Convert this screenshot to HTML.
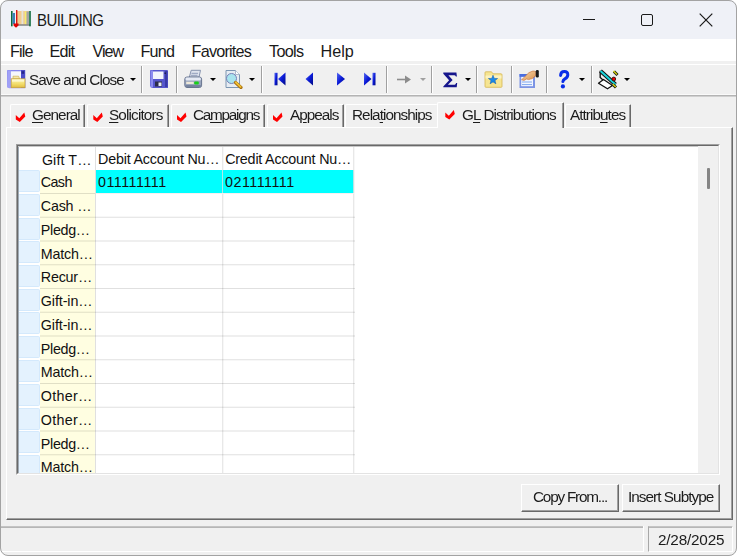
<!DOCTYPE html>
<html><head><meta charset="utf-8">
<style>
html,body{margin:0;padding:0;width:737px;height:556px;overflow:hidden;background:#fff;}
*{box-sizing:border-box;}
body{font-family:"Liberation Sans",sans-serif;color:#000;position:relative;}
.a{position:absolute;}
.t{position:absolute;white-space:pre;line-height:1;}
.mi{font-size:16.2px;color:#1a1a1a;top:42.8px;letter-spacing:-0.8px;}
.cl{font-size:15.3px;color:#1c1c1c;letter-spacing:-0.95px;will-change:transform;}
.sep{position:absolute;top:66px;width:2px;height:27px;border-left:1px solid #a0a0a0;border-right:1px solid #fff;}
.dd{position:absolute;top:78px;width:0;height:0;border-left:3px solid transparent;border-right:3px solid transparent;border-top:3px solid #000;}
.tab{position:absolute;top:104px;height:23px;border-top:1px solid #fff;border-left:1px solid #fff;border-right:1px solid #696969;box-shadow:inset -1px 0 0 #a0a0a0;border-top-left-radius:2px;border-top-right-radius:1px;}
u{text-decoration:underline;text-decoration-thickness:1px;text-underline-offset:2px;}
.hl{position:absolute;left:40px;width:314px;height:1px;background:#e4e4e4;}
.vl{position:absolute;width:1px;background:#e4e4e4;}
.sc{position:absolute;left:18px;width:22px;height:22px;background:#e4f2fe;border:1px solid #d4e9fc;border-left:none;border-radius:0 2px 2px 0;}
.gl{font-size:14.3px;color:#111;letter-spacing:-0.3px;left:41px;}
.btn{position:absolute;top:484px;height:28px;width:98px;border-top:1px solid #fff;border-left:1px solid #fff;border-right:1px solid #696969;border-bottom:1px solid #696969;box-shadow:inset -1px -1px 0 #a0a0a0;background:#f0f0f0;}
</style></head><body>
<div class="a" style="left:0;top:0;width:737px;height:556px;border-radius:8px;overflow:hidden;background:#f0f0f0;">
  <!-- title bar -->
  <div class="a" style="left:0;top:0;width:737px;height:39px;background:#eff1f7;"></div>
  <svg class="a" style="left:0;top:0" width="40" height="40" viewBox="0 0 40 40">
    <rect x="17" y="11" width="12" height="14" fill="#f2cc8e"/>
    <rect x="21.5" y="10.5" width="2" height="14" fill="#e6e2da"/>
    <rect x="23.5" y="11" width="1.5" height="14" fill="#f0d090"/>
    <rect x="25" y="11.5" width="1.5" height="13" fill="#f6ee6a"/>
    <rect x="26.5" y="11.5" width="2.5" height="13.5" fill="#a4a4a4"/>
    <rect x="17" y="24.2" width="13" height="1.6" fill="#8a8a8a"/>
    <rect x="11" y="11" width="1.6" height="15.3" fill="#0d6a3c"/>
    <rect x="29.2" y="11" width="1.6" height="15.3" fill="#0d6a3c"/>
    <rect x="12.5" y="13" width="2.5" height="11" fill="#3d80b8"/>
    <rect x="15" y="9" width="1.2" height="15" fill="#f4f4f4"/>
    <rect x="16" y="10" width="1.4" height="14" fill="#d81818"/>
    <path d="M13.5 23.5H18.5V25.5L16 27.7L13.5 25.5Z" fill="#e00000"/>
  </svg>
  <div class="t" style="left:37px;top:11.6px;font-size:16.4px;letter-spacing:-0.6px;color:#1a1a1a;transform:scaleX(0.915);transform-origin:0 0;">BUILDING</div>
  <div class="a" style="left:583px;top:19px;width:12px;height:1px;background:#1a1a1a;"></div>
  <div class="a" style="left:641px;top:14px;width:12px;height:12px;border:1.2px solid #1a1a1a;border-radius:2px;"></div>
  <svg class="a" style="left:699px;top:13px" width="14" height="14" viewBox="0 0 14 14"><path d="M0.7 0.7L13.3 13.3M13.3 0.7L0.7 13.3" stroke="#1a1a1a" stroke-width="1.2"/></svg>

  <!-- menu -->
  <div class="a" style="left:0;top:39px;width:737px;height:22px;background:#fff;"></div>
  <div class="t mi" style="left:10px;letter-spacing:-0.9px">File</div>
  <div class="t mi" style="left:49.5px;letter-spacing:-0.8px">Edit</div>
  <div class="t mi" style="left:92.5px;letter-spacing:-1.0px">View</div>
  <div class="t mi" style="left:140.5px;letter-spacing:-0.8px">Fund</div>
  <div class="t mi" style="left:191.6px;letter-spacing:-0.8px">Favorites</div>
  <div class="t mi" style="left:269px;letter-spacing:-0.7px">Tools</div>
  <div class="t mi" style="left:320.5px;letter-spacing:0">Help</div>

  <!-- toolbar -->
  <div class="a" style="left:0;top:64px;width:737px;height:1px;background:#fff"></div>
  <div class="a" style="left:0;top:94px;width:737px;height:1px;background:#fafafa"></div>
  <div class="a" style="left:0;top:95px;width:737px;height:1px;background:#b4b4b4"></div>
  <div class="a" style="left:0;top:96px;width:737px;height:1px;background:#d0d0d0"></div>
  <!-- save&close icon -->
  <svg class="a" style="left:4px;top:67px" width="24" height="24" viewBox="0 0 24 24">
    <defs>
      <linearGradient id="scp" x1="0" y1="0" x2="0" y2="1"><stop offset="0" stop-color="#8484ec"/><stop offset="1" stop-color="#a4a4f8"/></linearGradient>
      <linearGradient id="scf" x1="0" y1="0" x2="0" y2="1"><stop offset="0" stop-color="#fbf4b4"/><stop offset="0.6" stop-color="#f2dc68"/><stop offset="1" stop-color="#e0bc40"/></linearGradient>
    </defs>
    <path d="M3 4Q3 3 4 3H21L21.2 21.2H5L3 19.2Z" fill="url(#scp)"/>
    <rect x="3.4" y="3.4" width="3.4" height="17.5" fill="#a0a0f6"/>
    <rect x="17" y="3" width="4.2" height="18" fill="#4c4cc8"/>
    <rect x="17.6" y="4.2" width="2.6" height="2.6" fill="#26268a"/>
    <rect x="6.9" y="4.3" width="10.1" height="7.5" fill="#f6f7fc"/>
    <path d="M9 9.2H14.6L15.6 11.8H9Z" fill="#f4e8a8" stroke="#c8a848" stroke-width="0.6"/>
    <rect x="7.2" y="11.8" width="13.8" height="8.9" fill="url(#scf)" stroke="#c9a438" stroke-width="0.7"/>
    <rect x="8" y="12.6" width="12" height="2" fill="#fdf8d0"/>
  </svg>
  <div class="t cl" style="left:28.5px;top:71.5px">Save and Close</div>
  <div class="dd" style="left:130px"></div>
  <div class="sep" style="left:141px"></div>
  <!-- floppy -->
  <svg class="a" style="left:150px;top:70px" width="18" height="18" viewBox="0 0 18 18">
    <path d="M0 1Q0 0 1 0H17Q18 0 18 1V18H2L0 16Z" fill="#5656cc"/>
    <rect x="0.5" y="0.5" width="2.5" height="17" fill="#8c8cf0"/>
    <rect x="15" y="1" width="2.5" height="16" fill="#3a3aa8"/>
    <rect x="3" y="1.5" width="10.5" height="7.5" fill="#f2f4fc"/>
    <rect x="5" y="11.5" width="7" height="5" fill="#2c2c4a"/>
    <rect x="8.5" y="12.5" width="3" height="3.5" fill="#e8ecf8"/>
    <rect x="14.5" y="2.5" width="1.5" height="1.5" fill="#202050"/>
  </svg>
  <div class="sep" style="left:176px"></div>
  <!-- printer -->
  <svg class="a" style="left:181px;top:67px" width="24" height="24" viewBox="0 0 24 24">
    <path d="M10.2 3.3H19.5L18 10.2H8.3Z" fill="#dfe3ee" stroke="#7d8aa8" stroke-width="0.9"/>
    <path d="M10.5 6.3H17M9.8 8.3H16.5" stroke="#8894b4" stroke-width="0.9"/>
    <rect x="3.8" y="10" width="16.8" height="10.5" rx="2.2" fill="#9aa6be" stroke="#5c6a86" stroke-width="0.9"/>
    <rect x="4.6" y="10.6" width="15.2" height="2.8" rx="1" fill="#e6eaf4"/>
    <rect x="5.2" y="14.8" width="7.5" height="2.2" fill="#eee8d8"/>
    <rect x="13.2" y="14.6" width="4.6" height="2.8" rx="1" fill="#18d018"/>
    <rect x="4.6" y="18" width="15.2" height="2" fill="#76839e"/>
  </svg>
  <div class="dd" style="left:210px"></div>
  <!-- preview -->
  <svg class="a" style="left:225px;top:70px" width="19" height="19" viewBox="0 0 19 19">
    <path d="M1 0.5H10.5L14.5 4.5V17.5H1Z" fill="#e6ecf2" stroke="#7c96b2" stroke-width="1"/>
    <path d="M10.5 0.5V4.5H14.5" fill="#fff" stroke="#9aaac0" stroke-width="0.8"/>
    <circle cx="6.5" cy="8.5" r="5" fill="#a8e4ee" stroke="#7880b8" stroke-width="1"/>
    <path d="M10.5 12.5L16 17.5" stroke="#a87010" stroke-width="3.2" stroke-linecap="round"/>
    <path d="M10.8 12.3L15.6 16.8" stroke="#f0c030" stroke-width="1.8" stroke-linecap="round"/>
  </svg>
  <div class="dd" style="left:249px"></div>
  <div class="sep" style="left:261px"></div>
  <!-- nav -->
  <svg class="a" style="left:274px;top:72px" width="104" height="15" viewBox="0 0 104 15">
    <defs><linearGradient id="bg" x1="0" y1="0" x2="1" y2="1"><stop offset="0" stop-color="#5a6cf0"/><stop offset="0.5" stop-color="#0a1ad8"/><stop offset="1" stop-color="#000a80"/></linearGradient></defs>
    <rect x="0.5" y="0.8" width="3" height="12.5" fill="url(#bg)"/>
    <path d="M11.5 0.5V13.5L4 7Z" fill="url(#bg)"/>
    <path d="M39 0.5V13.5L31.5 7Z" fill="url(#bg)"/>
    <path d="M63 0.5V13.5L71 7Z" fill="url(#bg)"/>
    <path d="M90 0.5V13.5L97.5 7Z" fill="url(#bg)"/>
    <rect x="98.5" y="0.8" width="3" height="12.5" fill="url(#bg)"/>
  </svg>
  <div class="sep" style="left:386px"></div>
  <!-- gray arrow -->
  <svg class="a" style="left:397px;top:75px" width="15" height="10" viewBox="0 0 15 10">
    <path d="M0 4.5H10" stroke="#8c8c8c" stroke-width="1.6"/>
    <path d="M8 0.5L14 4.5L8 8.5Z" fill="#8c8c8c"/>
  </svg>
  <div class="dd" style="left:419.5px;border-top-color:#a0a0a0"></div>
  <div class="sep" style="left:431px"></div>
  <!-- sigma -->
  <svg class="a" style="left:443px;top:72px" width="15" height="16" viewBox="0 0 15 16">
    <path d="M0.3 0.6H13.4L13.9 4.4H12.9Q12.4 3.2 11.2 3.2H5.4L9.6 7.9L4.9 12.7H11.6Q12.6 12.7 13.1 11.1H14.2L13.7 15.3H0.3V14.5L6.1 8.3L0.3 1.7Z" fill="#16168c"/>
  </svg>
  <div class="dd" style="left:464.5px"></div>
  <div class="sep" style="left:476px"></div>
  <!-- folder star -->
  <svg class="a" style="left:484px;top:71px" width="19" height="17" viewBox="0 0 19 17">
    <path d="M1 1.5Q1 0.8 1.8 0.8H7.5L9 2.8H17Q18 2.8 18 3.8V15.5Q18 16.3 17 16.3H2Q1 16.3 1 15.5Z" fill="#f6e592" stroke="#d6b650" stroke-width="0.8"/>
    <rect x="1.5" y="4.5" width="16" height="3" fill="#fbf2c0"/>
    <path d="M9 4.2L10.3 7.4L13.6 7.5L11 9.6L11.9 12.8L9 10.9L6.1 12.8L7 9.6L4.4 7.5L7.7 7.4Z" fill="#1a8ae8" stroke="#0a58b0" stroke-width="0.5"/>
  </svg>
  <div class="sep" style="left:511px"></div>
  <!-- form hand -->
  <svg class="a" style="left:516px;top:67px" width="26" height="24" viewBox="0 0 26 24">
    <defs><linearGradient id="hg" x1="0" y1="0" x2="1" y2="1"><stop offset="0" stop-color="#fbdcb0"/><stop offset="1" stop-color="#d8904c"/></linearGradient></defs>
    <rect x="3.5" y="7" width="15.5" height="14" fill="#7c94e4"/>
    <rect x="3.5" y="7" width="15.5" height="2.8" fill="#4a6ee0"/>
    <rect x="5.2" y="9.9" width="11.8" height="9.3" fill="#f2f6fe"/>
    <path d="M6 15H16M6 17.6H16" stroke="#7ea6ee" stroke-width="1"/>
    <path d="M5.6 12.8L9 9.4L13 5.6L17 4L19.6 4.4L19.6 9L16.2 11.6L12.6 12.6L10.6 12L8 13.4Z" fill="url(#hg)" stroke="#c86c30" stroke-width="0.6"/>
    <rect x="19.8" y="3" width="3" height="7.6" rx="1.3" fill="#1a1a1a"/>
  </svg>
  <div class="sep" style="left:546px"></div>
  <!-- help -->
  <svg class="a" style="left:554px;top:68px" width="20" height="22" viewBox="0 0 20 22">
    <path d="M6.6 7.4Q6.8 3.6 10.4 3.6Q13.9 3.6 13.8 6.9Q13.7 9.4 10.9 10.9Q9 11.9 8.9 13.6" fill="none" stroke="#0a2ee8" stroke-width="3" stroke-linecap="round"/>
    <circle cx="8.9" cy="18.4" r="2.1" fill="#0a2ee8"/>
  </svg>
  <div class="dd" style="left:579px"></div>
  <div class="sep" style="left:591px"></div>
  <!-- satellite -->
  <svg class="a" style="left:596px;top:68px" width="26" height="22" viewBox="0 0 26 22">
    <path d="M2.5 15.2L7.5 11.5L12 14.5L16.5 17.5L11.5 20.8Z" fill="#fff" stroke="#111" stroke-width="1.3" stroke-linejoin="round"/>
    <path d="M4.2 2.8V9.5L7 12" fill="none" stroke="#111" stroke-width="1.4"/>
    <path d="M4.5 3L19.5 16.5" stroke="#111" stroke-width="4"/>
    <path d="M4.5 3L19.5 16.5" stroke="#1ad4dc" stroke-width="2"/>
    <path d="M18 3.5L21.5 7" stroke="#111" stroke-width="3"/>
    <path d="M17.5 3L21 6.5" stroke="#cccc10" stroke-width="1.6"/>
    <path d="M17 16.5L20 19.5" stroke="#111" stroke-width="3"/>
    <path d="M16.8 16.2L19.8 19" stroke="#cccc10" stroke-width="1.6"/>
    <circle cx="17.8" cy="11" r="1.9" fill="#e00" stroke="#111" stroke-width="0.8"/>
  </svg>
  <div class="dd" style="left:624px"></div>

  <!-- tab panel -->
  <div class="a" style="left:6px;top:127px;width:727px;height:393px;border-top:1px solid #fff;border-left:1px solid #fff;border-right:1px solid #696969;border-bottom:1px solid #696969;box-shadow:inset -1px -1px 0 #a0a0a0;"></div>

  <!-- tabs -->
  <div class="tab" style="left:10px;width:75px"></div>
  <div class="tab" style="left:87px;width:82px"></div>
  <div class="tab" style="left:171px;width:94px"></div>
  <div class="tab" style="left:267px;width:77px"></div>
  <div class="tab" style="left:345px;width:92px;border-right:none;box-shadow:none"></div>
  <div class="tab" style="left:437px;top:102px;height:26px;width:127px;background:#f0f0f0;"></div>
  <div class="a" style="left:438px;top:127px;width:124px;height:1px;background:#f0f0f0"></div>
  <div class="tab" style="left:565px;width:66px"></div>
  <svg class="a" style="left:0;top:0" width="737" height="130">
    <path transform="translate(15.3 112)" d="M0.5 3L4 6.2L9 0.5L10 4.5L4.5 10L0.5 7.5Z" fill="#f00"/>
    <path transform="translate(92.8 112)" d="M0.5 3L4 6.2L9 0.5L10 4.5L4.5 10L0.5 7.5Z" fill="#f00"/>
    <path transform="translate(176.5 112)" d="M0.5 3L4 6.2L9 0.5L10 4.5L4.5 10L0.5 7.5Z" fill="#f00"/>
    <path transform="translate(272.5 112)" d="M0.5 3L4 6.2L9 0.5L10 4.5L4.5 10L0.5 7.5Z" fill="#f00"/>
    <path transform="translate(444.8 109.5)" d="M0.5 3L4 6.2L9 0.5L10 4.5L4.5 10L0.5 7.5Z" fill="#f00"/>
  </svg>
  <div class="t cl" style="left:31.6px;top:106.6px"><u>G</u>eneral</div>
  <div class="t cl" style="left:109.4px;top:106.6px;letter-spacing:-0.85px"><u>S</u>olicitors</div>
  <div class="t cl" style="left:193.2px;top:106.6px;letter-spacing:-1.25px">Ca<u>m</u>paigns</div>
  <div class="t cl" style="left:289.8px;top:106.6px;letter-spacing:-1px">A<u>p</u>peals</div>
  <div class="t cl" style="left:351.5px;top:106.6px">Rela<u>t</u>ionships</div>
  <div class="t cl" style="left:462px;top:106.6px;letter-spacing:-0.9px">G<u>L</u> Distributions</div>
  <div class="t cl" style="left:569.5px;top:106.6px">Attrib<u>u</u>tes</div>

  <!-- grid -->
  <div class="a" style="left:16px;top:144px;width:704px;height:331px;border-top:1px solid #a0a0a0;border-left:1px solid #a0a0a0;border-right:1px solid #fff;border-bottom:1px solid #fff;">
    <div class="a" style="left:0;top:0;width:702px;height:329px;border-top:1px solid #696969;border-left:1px solid #696969;border-right:1px solid #e3e3e3;border-bottom:1px solid #e3e3e3;background:#fff;"></div>
  </div>
  <div class="a" style="left:698px;top:146px;width:20px;height:327px;background:#f0f0f0;"></div>
  <div class="a" style="left:707px;top:168px;width:2.5px;height:21px;background:#858585;border-radius:1px;"></div>
  <div id="gridc" class="a" style="left:18px;top:146px;width:680px;height:327px;overflow:hidden;">
    <div class="a" style="left:22px;top:24px;width:55px;height:310px;background:#fffee1"></div>
    <div class="a" style="left:78px;top:24px;width:126px;height:23px;background:#0ff"></div>
    <div class="a" style="left:205px;top:24px;width:130px;height:23px;background:#0ff"></div>
    <div class="a" style="left:77px;top:0px;width:1px;height:334px;background:rgba(0,0,0,0.122)"></div>
    <div class="a" style="left:204px;top:47px;width:1px;height:287px;background:rgba(0,0,0,0.091)"></div>
    <div class="a" style="left:205px;top:47px;width:1px;height:287px;background:rgba(0,0,0,0.030)"></div>
    <div class="a" style="left:335px;top:47px;width:1px;height:287px;background:rgba(0,0,0,0.091)"></div>
    <div class="a" style="left:336px;top:47px;width:1px;height:287px;background:rgba(0,0,0,0.030)"></div>
    <div class="a" style="left:204px;top:0px;width:1px;height:24px;background:rgba(0,0,0,0.091)"></div>
    <div class="a" style="left:205px;top:0px;width:1px;height:24px;background:rgba(0,0,0,0.030)"></div>
    <div class="a" style="left:335px;top:0px;width:1px;height:24px;background:rgba(0,0,0,0.091)"></div>
    <div class="a" style="left:336px;top:0px;width:1px;height:24px;background:rgba(0,0,0,0.030)"></div>
    <div class="a" style="left:204px;top:24px;width:1px;height:23px;background:#b4e6e6"></div>
    <div class="a" style="left:335px;top:24px;width:1px;height:23px;background:#b4e6e6"></div>
    <div class="a" style="left:336px;top:24px;width:1px;height:23px;background:#f4f4f4"></div>
    <div class="a" style="left:22px;top:47px;width:55px;height:1px;background:rgba(0,0,0,0.122)"></div>
    <div class="a" style="left:78px;top:47px;width:258px;height:1px;background:#f7f0f0"></div>
    <div class="a" style="left:22px;top:70px;width:315px;height:1px;background:rgba(0,0,0,0.030)"></div>
    <div class="a" style="left:22px;top:71px;width:315px;height:1px;background:rgba(0,0,0,0.091)"></div>
    <div class="a" style="left:22px;top:94px;width:315px;height:1px;background:rgba(0,0,0,0.061)"></div>
    <div class="a" style="left:22px;top:95px;width:315px;height:1px;background:rgba(0,0,0,0.061)"></div>
    <div class="a" style="left:22px;top:118px;width:315px;height:1px;background:rgba(0,0,0,0.091)"></div>
    <div class="a" style="left:22px;top:119px;width:315px;height:1px;background:rgba(0,0,0,0.030)"></div>
    <div class="a" style="left:22px;top:142px;width:315px;height:1px;background:rgba(0,0,0,0.122)"></div>
    <div class="a" style="left:22px;top:165px;width:315px;height:1px;background:rgba(0,0,0,0.030)"></div>
    <div class="a" style="left:22px;top:166px;width:315px;height:1px;background:rgba(0,0,0,0.091)"></div>
    <div class="a" style="left:22px;top:189px;width:315px;height:1px;background:rgba(0,0,0,0.061)"></div>
    <div class="a" style="left:22px;top:190px;width:315px;height:1px;background:rgba(0,0,0,0.061)"></div>
    <div class="a" style="left:22px;top:213px;width:315px;height:1px;background:rgba(0,0,0,0.091)"></div>
    <div class="a" style="left:22px;top:214px;width:315px;height:1px;background:rgba(0,0,0,0.030)"></div>
    <div class="a" style="left:22px;top:237px;width:315px;height:1px;background:rgba(0,0,0,0.122)"></div>
    <div class="a" style="left:22px;top:260px;width:315px;height:1px;background:rgba(0,0,0,0.030)"></div>
    <div class="a" style="left:22px;top:261px;width:315px;height:1px;background:rgba(0,0,0,0.091)"></div>
    <div class="a" style="left:22px;top:284px;width:315px;height:1px;background:rgba(0,0,0,0.061)"></div>
    <div class="a" style="left:22px;top:285px;width:315px;height:1px;background:rgba(0,0,0,0.061)"></div>
    <div class="a" style="left:22px;top:308px;width:315px;height:1px;background:rgba(0,0,0,0.091)"></div>
    <div class="a" style="left:22px;top:309px;width:315px;height:1px;background:rgba(0,0,0,0.030)"></div>
    <div class="sc" style="left:0px;top:24px;height:22px"></div>
    <div class="sc" style="left:0px;top:48px;height:22px"></div>
    <div class="sc" style="left:0px;top:72px;height:22px"></div>
    <div class="sc" style="left:0px;top:95px;height:22px"></div>
    <div class="sc" style="left:0px;top:119px;height:22px"></div>
    <div class="sc" style="left:0px;top:143px;height:22px"></div>
    <div class="sc" style="left:0px;top:166px;height:22px"></div>
    <div class="sc" style="left:0px;top:190px;height:22px"></div>
    <div class="sc" style="left:0px;top:214px;height:22px"></div>
    <div class="sc" style="left:0px;top:238px;height:22px"></div>
    <div class="sc" style="left:0px;top:262px;height:22px"></div>
    <div class="sc" style="left:0px;top:285px;height:22px"></div>
    <div class="sc" style="left:0px;top:309px;height:22px"></div>
    <div class="a" style="left:0;top:0;width:1px;height:330px;background:#a0aab4"></div>
    <div class="a" style="left:0;top:0;width:680px;height:1px;background:#c8c8c8"></div>
    <div class="t gl" style="left:22.799999999999997px;top:29.40px;letter-spacing:-0.6px">Cash</div>
    <div class="t gl" style="left:22.799999999999997px;top:53.15px;letter-spacing:-0.2px">Cash …</div>
    <div class="t gl" style="left:22.799999999999997px;top:76.90px;letter-spacing:-0.3px">Pledg…</div>
    <div class="t gl" style="left:22.799999999999997px;top:100.65px;letter-spacing:-0.2px">Match…</div>
    <div class="t gl" style="left:22.799999999999997px;top:124.40px;letter-spacing:-0.2px">Recur…</div>
    <div class="t gl" style="left:22.799999999999997px;top:148.15px;letter-spacing:-0.1px">Gift-in…</div>
    <div class="t gl" style="left:22.799999999999997px;top:171.90px;letter-spacing:-0.1px">Gift-in…</div>
    <div class="t gl" style="left:22.799999999999997px;top:195.65px;letter-spacing:-0.3px">Pledg…</div>
    <div class="t gl" style="left:22.799999999999997px;top:219.40px;letter-spacing:-0.2px">Match…</div>
    <div class="t gl" style="left:22.799999999999997px;top:243.15px;letter-spacing:0.3px">Other…</div>
    <div class="t gl" style="left:22.799999999999997px;top:266.90px;letter-spacing:0.3px">Other…</div>
    <div class="t gl" style="left:22.799999999999997px;top:290.65px;letter-spacing:-0.3px">Pledg…</div>
    <div class="t gl" style="left:22.799999999999997px;top:314.40px;letter-spacing:-0.2px">Match…</div>
    <div class="t gl" style="left:23.9px;top:6.5px;letter-spacing:0.1px">Gift T…</div>
    <div class="t gl" style="left:80.1px;top:6.4px;letter-spacing:-0.2px">Debit Account Nu…</div>
    <div class="t gl" style="left:207.2px;top:6.4px;letter-spacing:-0.2px">Credit Account Nu…</div>
    <div class="t gl" style="left:80px;top:28.7px;letter-spacing:0.5px">011111111</div>
    <div class="t gl" style="left:207px;top:28.7px;letter-spacing:0.5px">021111111</div>
  </div>

  <!-- buttons -->
  <div class="btn" style="left:521px"></div>
  <div class="btn" style="left:622px"></div>
  <div class="t cl" style="left:532.7px;top:488.5px;letter-spacing:-1.2px">Copy From...</div>
  <div class="t cl" style="left:627.8px;top:488.5px">Insert Subtype</div>

  <!-- status bar -->
  <div class="a" style="left:0;top:526px;width:644px;height:1px;background:#c4c4c4"></div>
  <div class="a" style="left:0;top:527px;width:644px;height:1px;background:#b6b6b6"></div>
  <div class="a" style="left:643px;top:526px;width:1px;height:26px;background:#fff"></div>
  <div class="a" style="left:0;top:551px;width:644px;height:1px;background:#fff"></div>
  <div class="a" style="left:648px;top:526px;width:85px;height:26px;border-top:1px solid #c4c4c4;border-left:1px solid #a8a8a8;border-right:1px solid #fff;border-bottom:1px solid #fff;box-shadow:inset 0 1px 0 #b6b6b6"></div>
  <div class="t cl" style="left:657.9px;top:531.5px;letter-spacing:-0.2px">2/28/2025</div>
</div>
<div class="a" style="left:0;top:0;width:737px;height:556px;border:1px solid #a3a3a3;border-radius:8px;"></div>
</body></html>
